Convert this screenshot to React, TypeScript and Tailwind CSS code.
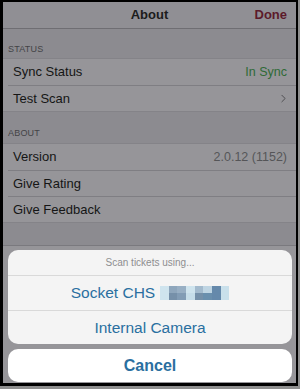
import { ChevronRight } from "lucide-react";

const mosaic = [
  "bg-[#cfe4ee]", "bg-[#8ea6bc]", "bg-[#98afc4]", "bg-[#cfe4ee]",
  "bg-[#a3bacd]", "bg-[#bfd5e3]", "bg-[#6589ab]", "bg-[#c9e0eb]",
  "bg-[#cfe4ee]", "bg-[#7690a9]", "bg-[#829cb5]", "bg-[#c6dde9]",
  "bg-[#7590a9]", "bg-[#6a8fad]", "bg-[#6589ab]", "bg-[#c9e0eb]",
];

function Row({ label, value, valueClass, chevron, first }: { label: string; value?: string; valueClass?: string; chevron?: boolean; first?: boolean }) {
  return (
    <div className="h-[26px] pl-[5px] flex">
      <div className={`flex-1 flex items-center pl-[5px] pr-[9px] ${first ? "" : "border-t border-[#7f7e83]"}`}>
        <span className="text-[13px] text-[#151515]">{label}</span>
        <span className={`ml-auto text-[12.5px] ${valueClass ?? "text-[#555558]"}`}>{value}</span>
        {chevron && <ChevronRight className="ml-auto -mr-[3px] w-[13px] h-[13px] text-[#48484b]" strokeWidth={1.7} />}
      </div>
    </div>
  );
}

export default function App() {
  return (
    <div className="w-[300px] h-[389px] bg-[#8e8e8e]">
      <div className="relative w-[298px] h-[386px] overflow-hidden border-black border-l-[3px] border-t-2 border-r-2 border-b-[3px] bg-[#8c8b90] font-['Liberation_Sans',Arial,sans-serif]">
        {/* nav */}
        <div className="relative h-[27px] bg-[#908f94] border-b border-[#6f6e73] flex items-center justify-center">
          <span className="text-[13px] font-bold text-[#1c1c1c]">About</span>
          <span className="absolute right-[9px] text-[13px] font-bold text-[#5c1a2a]">Done</span>
        </div>

        <div className="h-[29px] flex items-end pl-[5px] pb-[2px]">
          <span className="text-[9px] text-[#434346] tracking-[0.2px]">STATUS</span>
        </div>
        <div className="bg-[#969599] border-y border-[#848388]">
          <Row label="Sync Status" value="In Sync" valueClass="text-[#2f6a36]" first />
          <Row label="Test Scan" chevron />
        </div>

        <div className="h-[31px] flex items-end pl-[5px] pb-[3px]">
          <span className="text-[9px] text-[#434346] tracking-[0.2px]">ABOUT</span>
        </div>
        <div className="bg-[#969599] border-y border-[#848388]">
          <Row label="Version" value="2.0.12 (1152)" first />
          <Row label="Give Rating" />
          <Row label="Give Feedback" />
        </div>

        <div className="h-[22px]" />
        <div className="h-[200px] bg-[#969599] border-t border-[#7a797e]" />

        {/* action sheet */}
        <div className="absolute left-[5px] right-[4px] bottom-[1px] flex flex-col gap-[5px]">
          <div className="rounded-[10px] bg-[#f4f4f4] overflow-hidden">
            <div className="h-[26px] flex items-center justify-center border-b border-[#d9d9d9]">
              <span className="text-[10px] text-[#8e8e90]">Scan tickets using...</span>
            </div>
            <div className="h-[34px] flex items-center justify-center gap-[5px]">
              <span className="text-[15.5px] text-[#2a6fa0]">Socket CHS</span>
              <div className="grid grid-cols-8 w-[69px] h-[14px]">
                {mosaic.map((c, i) => (
                  <div key={i} className={c} />
                ))}
              </div>
            </div>
            <div className="h-[34px] flex items-center justify-center border-t border-[#d9d9d9]">
              <span className="text-[15.5px] text-[#2a6fa0]">Internal Camera</span>
            </div>
          </div>
          <div className="h-[33px] rounded-[10px] bg-white flex items-center justify-center">
            <span className="text-[16px] font-bold text-[#2a6fa0]">Cancel</span>
          </div>
        </div>
      </div>
    </div>
  );
}
